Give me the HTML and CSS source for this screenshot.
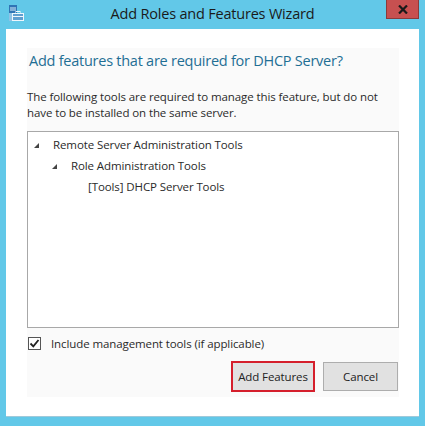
FILE: index.html
```html
<!DOCTYPE html>
<html lang="en">
<head>
    <meta charset="UTF-8">
    <title>Add Roles and Features Wizard</title>
    <link rel="stylesheet" href="styles.css">
</head>
<body>
    <div class="window">
        <div class="titlebar">
            <div class="app-icon">
                <svg width="17" height="18" viewBox="0 0 17 18">
                    <rect x="1" y="0" width="8" height="8" fill="#2f74b5"/>
                    <rect x="1" y="8" width="8" height="8" fill="#8fc3e6"/>
                    <line x1="2" y1="3" x2="8" y2="3" stroke="#d8ecf8" stroke-width="1"/>
                    <line x1="2" y1="5" x2="8" y2="5" stroke="#d8ecf8" stroke-width="1"/>
                    <rect x="4.5" y="8.5" width="11" height="7" fill="#5f9fd0" stroke="#eef6fc" stroke-width="1"/>
                    <rect x="8" y="6.5" width="4" height="2" fill="none" stroke="#eef6fc" stroke-width="1"/>
                    <line x1="5" y1="11.5" x2="15" y2="11.5" stroke="#eef6fc" stroke-width="1"/>
                </svg>
            </div>
            <div class="title">Add Roles and Features Wizard</div>
            <div class="close-wrap">
                <div class="close-btn">
                    <svg width="10" height="9" viewBox="0 0 10 9">
                        <path d="M1 0.5 L9 8.5 M9 0.5 L1 8.5" stroke="#1a1a1a" stroke-width="2.2"/>
                    </svg>
                </div>
            </div>
        </div>

        <div class="client">
            <div class="panel">
                <h1>Add features that are required for DHCP Server?</h1>
                <p class="intro">The following tools are required to manage this feature, but do not have to be installed on the same server.</p>

                <div class="tree">
                    <div class="tree-row level-0"><span class="arrow"></span>Remote Server Administration Tools</div>
                    <div class="tree-row level-1"><span class="arrow"></span>Role Administration Tools</div>
                    <div class="tree-row level-2">[Tools] DHCP Server Tools</div>
                </div>

                <label class="check-row">
                    <span class="checkbox">
                        <svg width="11" height="11" viewBox="0 0 11 11">
                            <path d="M1.5 5.5 L4.3 8.3 L9.5 2" fill="none" stroke="#222" stroke-width="1.8"/>
                        </svg>
                    </span>
                    Include management tools (if applicable)
                </label>

                <div class="buttons">
                    <button type="button" class="btn btn-add">Add Features</button>
                    <button type="button" class="btn">Cancel</button>
                </div>
            </div>
        </div>
    </div>
</body>
</html>
```

FILE: styles.css
```css
body {
    margin: 0;
    background-color: #62c8e8;
    font-family: "Open Sans", "Noto Sans", sans-serif;
    color: #2b2b2b;
}

.window {
    width: 425px;
    height: 426px;
    box-sizing: border-box;
    padding: 0 6px;
}

.titlebar {
    height: 29px;
    display: grid;
    grid-template-columns: 1fr auto 1fr;
    align-items: start;
}

.app-icon {
    padding: 5px 0 0 2px;
}

.title {
    font-size: 14.5px;
    color: #1a1a1a;
    line-height: 28px;
    letter-spacing: -0.2px;
}

.close-wrap {
    display: flex;
    justify-content: flex-end;
}

.close-btn {
    width: 33px;
    height: 19px;
    background-color: #c75050;
    border: 1px solid #8a3b3b;
    border-top: none;
    box-sizing: border-box;
    display: flex;
    align-items: center;
    justify-content: center;
}

.client {
    background-color: #ffffff;
    height: 388px;
    padding: 19px 0 0 21px;
    box-sizing: border-box;
    border-bottom: 1px solid #9fc9da;
}

.panel {
    width: 372px;
    height: 349px;
    background-color: #fafafa;
    display: flex;
    flex-direction: column;
}

h1 {
    font-weight: normal;
    font-size: 14.5px;
    color: #1f6e94;
    margin: 3px 0 0 2px;
    line-height: 20px;
    letter-spacing: -0.25px;
}

.intro {
    font-size: 11.5px;
    line-height: 16px;
    margin: 18px 0 0 0;
    letter-spacing: -0.1px;
    color: #2a2a2a;
}

.tree {
    margin-top: 10px;
    height: 197px;
    box-sizing: border-box;
    border: 1px solid #a8a8a8;
    background-color: #ffffff;
    padding-top: 2px;
}

.tree-row {
    font-size: 11.5px;
    letter-spacing: -0.1px;
    height: 21px;
    line-height: 21px;
    display: flex;
    align-items: center;
    color: #2a2a2a;
}

.level-0 {
    padding-left: 6px;
}

.level-1 {
    padding-left: 24px;
}

.level-2 {
    padding-left: 60px;
}

.arrow {
    width: 0;
    height: 0;
    border-left: 5px solid transparent;
    border-bottom: 5px solid #444;
    margin-right: 14px;
    margin-top: 2px;
}

.check-row {
    display: flex;
    align-items: center;
    font-size: 11.5px;
    letter-spacing: -0.1px;
    margin-top: 8px;
    margin-left: 1px;
    height: 15px;
    color: #2a2a2a;
}

.checkbox {
    width: 13px;
    height: 13px;
    box-sizing: border-box;
    border: 1px solid #555;
    background-color: #fff;
    margin-right: 10px;
    display: flex;
    align-items: center;
    justify-content: center;
}

.buttons {
    display: flex;
    justify-content: flex-end;
    gap: 9px;
    margin-top: 11px;
    padding-right: 1px;
}

.btn {
    font-family: "Open Sans", "Noto Sans", sans-serif;
    font-size: 11.5px;
    letter-spacing: -0.1px;
    color: #222;
    height: 29px;
    width: 75px;
    background-color: #e1e1e1;
    border: 1px solid #adadad;
    padding: 0;
}

.btn-add {
    width: 82px;
    outline: 2px solid #d51f2c;
    outline-offset: -1px;
}
```
